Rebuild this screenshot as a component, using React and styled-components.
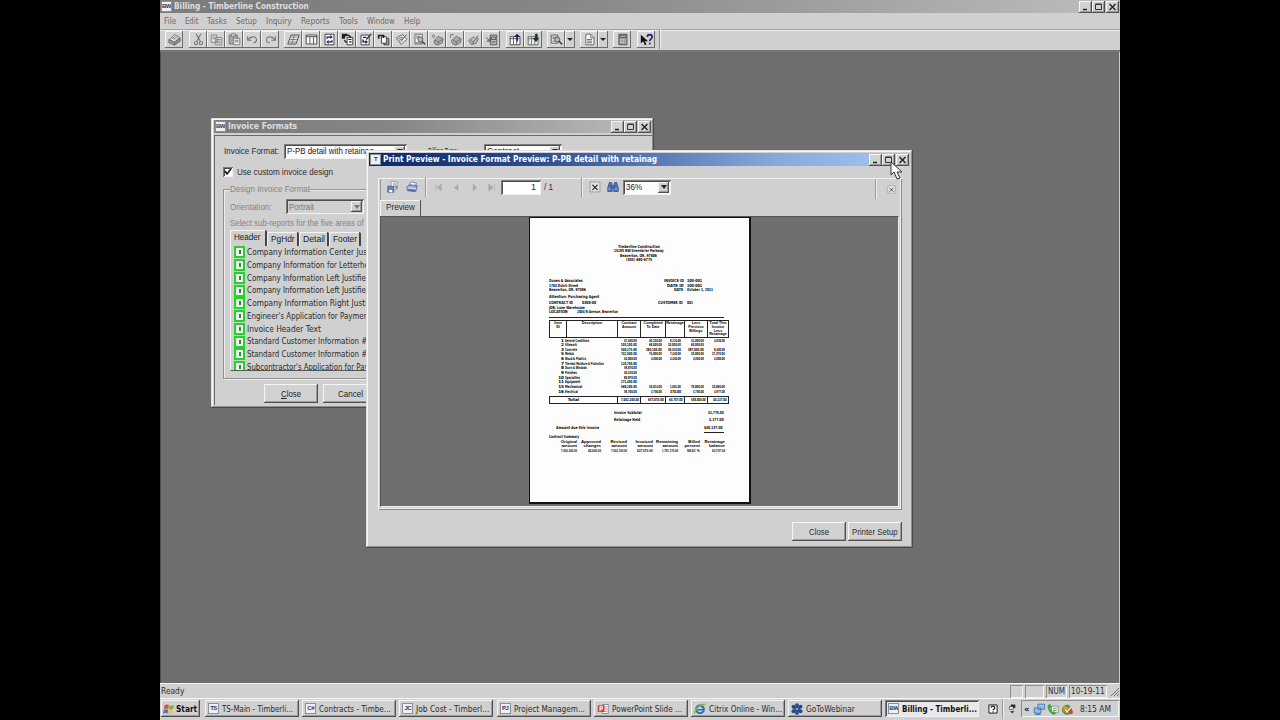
import React, { useLayoutEffect, useRef, useState } from 'react';
import styled, { createGlobalStyle, css } from 'styled-components';

const GlobalStyle = createGlobalStyle`
  * { box-sizing: border-box; }
  body { margin: 0; background: #000; overflow: hidden; }
`

const raised = css`
  box-shadow: inset -1px -1px #505050, inset 1px 1px #f6f6f6, inset -2px -2px #9c9c9c;
`
const sunken = css`
  box-shadow: inset 1px 1px #7c7c7c, inset -1px -1px #f2f2f2, inset 2px 2px #4c4c4c;
`
const thinSunken = css`
  box-shadow: inset 1px 1px #8e8e8e, inset -1px -1px #f4f4f4;
`

const Screen = styled.div`
  width: 960px;
  height: 720px;
  margin: 0 auto;
  display: flex;
  flex-direction: column;
  background: #d0d0d0;
  color: #2c2c2c;
  font-family: "DejaVu Sans", sans-serif;
  font-size: 8.5px;
  cursor: default;
`
const FitBox = styled.span`
  display: block;
  flex: none;
  width: ${p => p.$w}px;
  white-space: nowrap;
  text-align: left;
`
const FitInner = styled.span`
  display: inline-block;
  transform-origin: 0 50%;
`

// Squeezes or stretches a run of text to the given width
function Fit({ w, children, className }) {
  const ref = useRef(null);
  const [scale, setScale] = useState(1);
  useLayoutEffect(() => {
    setScale(w / ref.current.offsetWidth);
  }, [w]);
  return (
    <FitBox $w={w} className={className}>
      <FitInner ref={ref} style={{ transform: `scaleX(${scale})` }}>{children}</FitInner>
    </FitBox>
  );
}

/* ---------- icons ---------- */

const Svg = styled.svg`
  display: block;
  flex: none;
  width: ${p => p.$s || 14}px;
  height: ${p => p.$s || 14}px;
  overflow: visible;
`
const glyphs = {
  print: <g stroke="#666" fill="#b4b4b4"><path d="M2 8l6-6 6 3-6 7z" fill="#e4e4e4"/><path d="M1 8l7 3v4L1 12z" fill="#999"/><path d="M8 11l7-5v4l-7 5z" fill="#8a8a8a"/><path d="M5 7l4-3M7 8l4-3" /></g>,
  cut: <g stroke="#777" fill="none" strokeWidth="1.3"><path d="M5 1l5 9M11 1L6 10"/><circle cx="5" cy="12.5" r="2"/><circle cx="11" cy="12.5" r="2"/></g>,
  copy: <g stroke="#777" fill="#e4e4e4"><path d="M1.500 2.500h7v9h-7zM6.500 5.500h8v9h-8z"/><path d="M3 5h3M3 7h3M8 8h5M8 10h5M8 12h5"/></g>,
  paste: <g stroke="#6c6c6c" fill="#a8a8a8"><path d="M1.500 2.500h10v11h-10z"/><path d="M4 1h5v3H4z" fill="#ddd"/><path d="M6.500 6.500h8v8h-8z" fill="#eee"/><path d="M8 9h5M8 11h5"/></g>,
  undo: <path d="M2 4v5h5M2 9c3-5 10-6 11-1 0 3-2 4-4 4" fill="none" stroke="#777" strokeWidth="1.3"/>,
  redo: <path d="M14 4v5H9M14 9C11 4 4 3 3 8c0 3 2 4 4 4" fill="none" stroke="#777" strokeWidth="1.3"/>,
  sheet: <g stroke="#333" fill="#eee"><path d="M5 2.500h10l-4 11H1z"/><path d="M5 5h8M4 8h8M3 11h8M9 3L6 13" stroke="#666"/></g>,
  table: <g stroke="#333" fill="#fafafa"><path d="M1.500 2.500h13v11h-13z"/><path d="M1 4.500h14M6 5v8M10.500 5v8" /></g>,
  refresh: <g><path d="M2.500 1.500h11v13h-11z" fill="#fff" stroke="#222"/><path d="M5 7V5h4M11 9v2H7" fill="none" stroke="#14145c" strokeWidth="1.500"/><path d="M9 2.500L12 5 9 7.500zM7 8.500L4 11l3 2.500z" fill="#14145c"/></g>,
  sync: <g><path d="M7.500 5.500h7v9h-7z" fill="#fff" stroke="#222"/><path d="M1 1h7v3H5v3H1z" fill="#222"/><path d="M3 6c0-4 8-5 9 0M4 9l3 3" fill="none" stroke="#222" strokeWidth="1.600"/><path d="M9 8h4M10 11h3" stroke="#14145c" strokeWidth="1.500"/></g>,
  edit: <g><path d="M2.500 2.500h10v12h-10z" fill="#fff" stroke="#222"/><path d="M5 5.500h4M5 8v3h4" fill="none" stroke="#14145c" strokeWidth="1.600"/><path d="M8 8.500L11 11l-3 2.500z" fill="#14145c"/><path d="M9 8l6-7" stroke="#333" strokeWidth="1.600"/></g>,
  stack: <g><path d="M8.500 6.500h6v8h-6z" fill="#999" stroke="#333"/><path d="M5.500 4.500h6v8h-6z" fill="#fff" stroke="#333"/><path d="M2 7V3h6v3" fill="none" stroke="#222" strokeWidth="2"/></g>,
  note: <g stroke="#555" fill="#eee"><path d="M1.500 6l8-4 5 6-7 6z"/><path d="M4 7l6-2M5 9l5-2M7 11l7-9" /></g>,
  search: <g stroke="#555" fill="#f1f1f1"><path d="M2.500 1.500h9v12h-9z"/><path d="M4 4h5M4 6h3M3 12h8"/><circle cx="9" cy="8" r="3" fill="#bbb"/><path d="M11 10l4 4" strokeWidth="2"/></g>,
  gearprint: <g stroke="#666" fill="#aaa"><path d="M4 9l5-5 6 3-1 5-6 3-4-2z"/><path d="M5 9l4 2 5-3M9 11v3"/><circle cx="3" cy="4" r="1.500" fill="none"/></g>,
  handprint: <g stroke="#666" fill="#aaa"><path d="M3 9l6-5 6 3-1 5-6 3-4-2z"/><path d="M5 9l4 2 5-3M9 11v3M2 2h4M2 2v4"/></g>,
  post: <g stroke="#666" fill="#bbb"><path d="M2 9l6-4 6 2-3 6-6 1z"/><path d="M4 9l4 2 6-8M8 11l-1 3"/></g>,
  exit: <g stroke="#444" fill="#bbb"><path d="M6.500 2.500h8v12h-8z"/><path d="M8 5h5v3H8zM8 11h5M1 5l5 5M2 10h4V6"/></g>,
  colup: <g><path d="M1.500 4.500h12v10h-12z" fill="#fff" stroke="#333"/><path d="M1 7h12M5.500 5v9M9.500 5v9" stroke="#444"/><path d="M10 1l4 4h-3v5H9V5H6z" fill="#1c2270"/></g>,
  coldown: <g><path d="M1.500 4.500h12v10h-12z" fill="#eee" stroke="#555"/><path d="M1 7h12M5.500 5v9M9.500 5v9" stroke="#666"/><path d="M10 1h3v5h2l-4 5-4-5h3z" fill="#1c3328"/></g>,
  zoomdoc: <g stroke="#444" fill="#f1f1f1"><path d="M1.500 2.500h8v10h-8z"/><path d="M3 5h5M3 7h3M3 10h4"/><circle cx="9" cy="8" r="3" fill="#bbb"/><path d="M11 10l4 4" strokeWidth="1.800"/></g>,
  doc: <g stroke="#555" fill="#f6f6f6"><path d="M3.500 1.500h6l4 4v9h-10z"/><path d="M9.500 2v4h4M5 8h6M5 10h6M5 12h6" fill="none"/></g>,
  calc: <g stroke="#444" fill="#999"><path d="M3.500 1.500h10v13h-10z"/><path d="M5 3.500h7v2H5z" fill="#eee"/><path d="M5 8.500h7M5 11.500h7" stroke="#eee" strokeDasharray="2 1"/></g>,
  help: <g fill="#111"><path d="M1 2v11l3-3 2 5 2-1-2-4h4z"/><path d="M9 5c0-4 6-4 6 0 0 2.500-3 2-3 5M12 12v2" fill="none" stroke="#1c2270" strokeWidth="2"/></g>,
  exportIcon: <g><path d="M5.500.5h8v11h-8z" fill="#f4f4f4" stroke="#8391a5"/><path d="M8 3h4M8 5h4" stroke="#8391a5"/><path d="M1 7h8v8H1z" fill="#6b87ad" stroke="#44597a"/><path d="M3 12h4v3H3z" fill="#fff"/><path d="M8 8h5M11 6l3 2-3 3" stroke="#44597a" fill="none"/></g>,
  bluePrint: <g stroke="#48628f"><path d="M4 5l3-4 7 2-2 4z" fill="#fff"/><path d="M1 8l4-3 10 1-2 8-11-1z" fill="#8aaada"/><path d="M2 9l11 1" stroke="#fff"/><path d="M3 12l9 1" strokeWidth="2"/></g>,
  first: <path d="M4 3v10M12 3L6 8l6 5z" fill="#aaa" stroke="#aaa"/>,
  prev: <path d="M10 4L5 8l5 4z" fill="#aaa" stroke="#aaa"/>,
  next: <path d="M6 3l5 5-5 5z" fill="#aaa" stroke="#aaa"/>,
  last: <path d="M12 3v10M4 3l6 5-6 5z" fill="#aaa" stroke="#aaa"/>,
  binoculars: <g fill="#5272b4" stroke="#32518e"><path d="M3 2h3l1 5v7H1V9zM10 2h3l2 7v5H9V7z"/><path d="M6 6h4v3H6z"/><path d="M3 9v3M12 9v3" stroke="#cddaf2"/></g>,
  xbox: <g><path d="M1.500 1.500h13v13h-13z" fill="#e8e8e8" stroke="#8c8c8c"/><path d="M4.500 5l7 7M11.500 5l-7 7" stroke="#333" strokeWidth="1.500"/></g>,
  flag: <g><path d="M2 3c2-2 4-1 6 0L7 8C5 7 3 7 1 8z" fill="#d9582b"/><path d="M9 3c2 1 4 1 6 0l-2 5c-2 1-4 1-5 0z" fill="#7fae3c"/><path d="M1 9c2-1 4-1 6 0l-1 5c-2-1-4-1-6 0z" fill="#4a76c4"/><path d="M8 9c1 1 3 1 5 0l-1 5c-2 1-4 1-5 0z" fill="#eec33d"/></g>,
  ppt: <g><path d="M7 2h8v12H7z" fill="#fff" stroke="#5b7794"/><path d="M9 5h5M9 8h5M9 11h5" stroke="#c66"/><path d="M1 3h9v9H1z" fill="#c8452b"/><path d="M4 11V5h3v3H4" fill="none" stroke="#fff" strokeWidth="1.500"/></g>,
  ie: <g fill="none"><circle cx="8" cy="8.500" r="5" stroke="#2277b8" strokeWidth="3"/><path d="M5 9h8" stroke="#2277b8" strokeWidth="2"/><path d="M1 14C0 9 10 0 15 2" stroke="#8eb53c" strokeWidth="2"/></g>,
  gotomeeting: <g fill="#284b86"><circle cx="8" cy="8" r="4"/><circle cx="8" cy="2.800" r="2.600"/><circle cx="8" cy="13.200" r="2.600"/><circle cx="3.300" cy="5" r="2.600"/><circle cx="12.700" cy="5" r="2.600"/><circle cx="3.300" cy="11" r="2.600"/><circle cx="12.700" cy="11" r="2.600"/><circle cx="8" cy="8" r="1.800" fill="#8aa4d2"/></g>,
  restore: <g><path d="M5 1h8v6H5z" fill="#222"/><path d="M2.500 4.500h7v5h-7z" fill="#eee" stroke="#222"/><path d="M4 13h7l-3.500 3.500z" fill="#111"/></g>,
  network: <g stroke="#3a6aa8" fill="#8cc0ee"><path d="M6.500 1.500h9v7h-9zM1.500 6.500h9v7h-9z"/><path d="M3 15h7" strokeWidth="1.600"/></g>,
  phone: <g><path d="M6 4h9v9H6z" fill="#edf3ea" stroke="#6a8e60"/><path d="M8 7h5M8 10h5" stroke="#668"/><path d="M1 3l3-2 2 4-2 2 4 5 2-1 2 3-3 2C4 14 0 8 1 3z" fill="#3fa83c"/></g>,
  sound: <g><circle cx="8" cy="9" r="6" fill="#5aa945" stroke="#37752f"/><path d="M3 3l7 4-1 5-6-2z" fill="#e59526"/><path d="M6 9l2 3 6-7" fill="none" stroke="#fff" strokeWidth="1.500"/><circle cx="13" cy="12" r="3" fill="#cc4a33"/></g>,
  helpbox: <g><path d="M1.500 1.500h13v13h-13z" fill="#fff" stroke="#111" strokeWidth="1.500"/><path d="M5 6c0-4 6-3 6 0 0 2-3 2-3 4M8 11.500v2" fill="none" stroke="#111" strokeWidth="1.800"/></g>,
};

function Icon({ name, size }) {
  return <Svg viewBox="0 0 16 16" $s={size}>{glyphs[name]}</Svg>;
}

const AppBadge = styled.span`
  flex: none;
  width: 11px;
  height: 11px;
  background: #eef0f4;
  border: 1px solid #8a8f9c;
  color: #2b3560;
  font: bold 6px/9px "Liberation Sans", sans-serif;
  letter-spacing: -0.5px;
  text-align: center;
  overflow: hidden;
`

/* ---------- window chrome ---------- */

const TitleBar = styled.div`
  display: flex;
  align-items: center;
  flex: none;
  height: 13px;
  padding: 0 2px 0 1px;
  gap: 2px;
  background: ${p => p.$active
    ? 'linear-gradient(90deg, #0c2868 0%, #2a4c8c 30%, #86a8dc 75%, #a4c8f2 100%)'
    : 'linear-gradient(90deg, #7c7c7c 0%, #858585 40%, #bdbdbd 100%)'};
  color: ${p => p.$active ? '#fff' : '#dedede'};
  font-size: 8.8px;
  font-weight: bold;
  line-height: 13px;
`
const CaptionButtons = styled.div`
  display: flex;
  margin-left: auto;
  margin-right: -1px;
`
const CaptionButton = styled.span`
  width: 13px;
  height: 12px;
  background: #d2d2d2;
  ${raised}
  display: flex;
  align-items: center;
  justify-content: center;
  &:last-child { margin-left: 1px; }
`
function Captions() {
  return (
    <CaptionButtons>
      <CaptionButton><Svg $s={8} viewBox="0 0 8 8"><path d="M1 6.500h4" stroke="#222" strokeWidth="1.500"/></Svg></CaptionButton>
      <CaptionButton><Svg $s={8} viewBox="0 0 8 8"><path d="M.5 1.500h6v5h-6zM.5 1h6" fill="none" stroke="#333"/></Svg></CaptionButton>
      <CaptionButton><Svg $s={8} viewBox="0 0 8 8"><path d="M.5 1l6 6M6.500 1l-6 6" stroke="#222" strokeWidth="1.400"/></Svg></CaptionButton>
    </CaptionButtons>
  );
}
const Arrow = styled.span`
  width: 11px;
  align-self: stretch;
  margin-left: auto;
  background: #d0d0d0;
  ${raised}
  display: flex;
  align-items: center;
  justify-content: center;
  &::after {
    content: '';
    border: 3px solid transparent;
    border-top: 4px solid ${p => p.$dim ? '#777' : '#222'};
    border-bottom: 0;
  }
`
const Select = styled.div`
  flex: none;
  display: flex;
  align-items: center;
  width: ${p => p.$w}px;
  height: 15px;
  padding: 2px 2px 2px 3px;
  background: ${p => p.$dim ? '#d0d0d0' : '#fcfcfc'};
  color: ${p => p.$dim ? '#777' : '#222'};
  ${sunken}
`
const PushButton = styled.div`
  width: 54px;
  height: 19px;
  display: flex;
  align-items: center;
  justify-content: center;
  flex: none;
  background: #d2d2d2;
  ${raised}
  u { text-underline-offset: 1px; }
`

/* ---------- main menu and toolbar ---------- */

const MenuBar = styled.div`
  height: 16px;
  display: flex;
  gap: 9px;
  padding: 0 0 0 4px;
  line-height: 16px;
  color: #6b6b6b;
`
const Toolbar = styled.div`
  height: 23px;
  flex: none;
  display: flex;
  align-items: center;
  padding: 0 0 2px 5px;
  border-top: 1px solid #a4a4a4;
  border-bottom: 2px solid #777;
  box-shadow: inset 0 1px #ececec;
`
const ToolGroup = styled.div`
  display: flex;
  margin-right: ${p => p.$after || 6}px;
`
const ToolButton = styled.span`
  width: 18px;
  height: 17px;
  display: flex;
  align-items: center;
  justify-content: center;
  background: #d4d4d4;
  box-shadow: inset -1px -1px #6a6a6a, inset 1px 1px #f4f4f4;
`
const ToolDrop = styled.span`
  width: 10px;
  height: 17px;
  display: flex;
  align-items: center;
  justify-content: center;
  box-shadow: inset -1px -1px #6a6a6a, inset 1px 1px #f4f4f4;
  &::after { content: ''; border: 3px solid transparent; border-top-color: #222; border-bottom: 0; }
`
const ToolEnd = styled.span`
  width: 2px;
  height: 20px;
  border-left: 1px solid #888;
  border-right: 1px solid #f2f2f2;
`
const toolGroups = [
  { icons: ['print'], after: 6 },
  { icons: ['cut', 'copy', 'paste', 'undo', 'redo'], after: 5 },
  { icons: ['sheet', 'table', 'refresh', 'sync', 'edit', 'stack', 'note', 'search', 'gearprint', 'handprint', 'post', 'exit'], after: 6 },
  { icons: ['colup', 'coldown'], after: 5 },
  { icons: ['zoomdoc'], drop: true, after: 5 },
  { icons: ['doc'], drop: true, after: 5 },
  { icons: ['calc'], after: 6 },
  { icons: ['help'], after: 4 },
];
const menus = [['File', 12], ['Edit', 13], ['Tasks', 20], ['Setup', 21], ['Inquiry', 26], ['Reports', 29], ['Tools', 19], ['Window', 28], ['Help', 16]];

const Workspace = styled.div`
  position: relative;
  flex: 1;
  background: #6e6e6e;
  border-left: 1px solid #4e4e4e;
  border-right: 1px solid #c8c8c8;
`
const Window = styled.div`
  position: absolute;
  left: ${p => p.$x}px;
  top: ${p => p.$y}px;
  width: ${p => p.$w}px;
  height: ${p => p.$h}px;
  padding: ${p => p.$pad};
  display: flex;
  flex-direction: column;
  background: #d0d0d0;
  box-shadow: inset -1px -1px #4a4a4a, inset 1px 1px #dedede, inset -2px -2px #8e8e8e, inset 2px 2px #f8f8f8;
`

/* ---------- invoice formats ---------- */

const FormatBody = styled.div`
  margin-top: 2px;
  border-top: 1px solid #6a6a6a;
  border-left: 1px solid #6a6a6a;
  flex: 1;
  padding: 8px 0 0 9px;
  font-family: "Liberation Sans", Arial, sans-serif;
  font-size: 9px;
`
const FieldRow = styled.div`
  display: flex;
  align-items: center;
  height: 14px;
`
const FieldGap = styled.span`
  flex: none;
  width: ${p => p.$w}px;
`
const CheckRow = styled.div`
  display: flex;
  align-items: center;
  gap: 4px;
  height: 12px;
  margin: 8px 0 0 -1px;
`
const Checkbox = styled.span`
  width: 10px;
  height: 10px;
  background: #fff;
  ${sunken}
  display: flex;
  align-items: center;
  justify-content: center;
`
const Group = styled.div`
  margin: 11px 0 0 -1px;
  width: 420px;
  height: 190px;
  border: 1px solid #929292;
  box-shadow: inset 1px 1px #eee, 1px 1px #eee;
  padding: 0 0 0 6px;
  color: #858585;
`
const Legend = styled.div`
  display: table;
  margin-top: -7px;
  height: 13px;
  line-height: 13px;
  background: #d0d0d0;
`
const OrientRow = styled.div`
  display: flex;
  align-items: center;
  height: 15px;
  margin-top: 3px;
  gap: 14px;
`
const SubNote = styled.div`
  height: 12px;
  line-height: 12px;
  margin-top: 3px;
`
const FormatTabs = styled.div`
  display: flex;
  align-items: flex-end;
  height: 16px;
  margin-top: 1px;
  color: #222;
`
const FormatTab = styled.div`
  height: ${p => p.$on ? 16 : 14}px;
  line-height: ${p => p.$on ? 15 : 14}px;
  padding: 0 ${p => p.$on ? 4 : 2}px 0 4px;
  border-radius: 2px 2px 0 0;
  border-right: 2px solid #444;
  box-shadow: inset 1px 1px #f4f4f4;
`
const FormatList = styled.div`
  height: 125px;
  overflow: hidden;
  border-left: 1px solid #f0f0f0;
  border-bottom: 1px solid #555;
  margin-right: 8px;
  color: #2a2a2a;
  font: 9px/12.75px "DejaVu Sans", sans-serif;
`
const FormatItem = styled.div`
  display: flex;
  align-items: center;
  height: 12.75px;
  padding-left: 4px;
  gap: 3px;
`
const GreenIcon = styled.span`
  width: 9px;
  height: 10px;
  border: 1px solid #23d32b;
  outline: 0.5px solid #23d32b;
  background: #eefbee;
  display: flex;
  align-items: center;
  justify-content: center;
  &::after { content: ''; width: 2px; height: 4px; background: #3d7a46; }
`
const FormatButtons = styled.div`
  display: flex;
  gap: 5px;
  margin: 5px 0 0 40px;
  color: #222;
`
const formats = [
  ['Company Information Center Justified', 139], ['Company Information for Letterhead', 131],
  ['Company Information Left Justified 1', 130], ['Company Information Left Justified 2', 130],
  ['Company Information Right Justified', 134], ["Engineer's Application for Payment", 124],
  ['Invoice Header Text', 74], ['Standard Customer Information #1', 125],
  ['Standard Customer Information #2', 125], ["Subcontractor's Application for Payment", 140],
];

function InvoiceFormats() {
  return (
    <Window $x={50} $y={66} $w={443} $h={290} $pad="2px 2px 3px 3px">
      <TitleBar><AppBadge>BW</AppBadge><Fit w={69}>Invoice Formats</Fit><Captions /></TitleBar>
      <FormatBody>
        <FieldRow>
          <Fit w={55}>Invoice Format:</Fit><FieldGap $w={5} />
          <Select $w={123}><Fit w={87}>P-PB detail with retainag</Fit><Arrow /></Select>
          <FieldGap $w={21} /><Fit w={30}>Billing Type:</Fit><FieldGap $w={26} />
          <Select $w={78}><Fit w={32}>Contract</Fit><Arrow /></Select>
        </FieldRow>
        <CheckRow>
          <Checkbox><Svg $s={8} viewBox="0 0 8 8"><path d="M1 3l2 3 4-5" fill="none" stroke="#111" strokeWidth="1.600"/></Svg></Checkbox>
          <Fit w={96}>Use custom invoice design</Fit>
        </CheckRow>
        <Group>
          <Legend><Fit w={80}>Design Invoice Format</Fit></Legend>
          <OrientRow><Fit w={42}>Orientation:</Fit><Select $w={78} $dim><Fit w={25}>Portrait</Fit><Arrow $dim /></Select></OrientRow>
          <SubNote><Fit w={134}>Select sub-reports for the five areas of</Fit></SubNote>
          <FormatTabs>
            <FormatTab $on><Fit w={27}>Header</Fit></FormatTab>
            <FormatTab><Fit w={24}>PgHdr</Fit></FormatTab>
            <FormatTab><Fit w={22}>Detail</Fit></FormatTab>
            <FormatTab><Fit w={24}>Footer</Fit></FormatTab>
          </FormatTabs>
          <FormatList>
            {formats.map(([name, w]) => (
              <FormatItem key={name}><GreenIcon /><Fit w={w}>{name}</Fit></FormatItem>
            ))}
          </FormatList>
        </Group>
        <FormatButtons>
          <PushButton><Fit w={20}><u>C</u>lose</Fit></PushButton>
          <PushButton><Fit w={25}>Cancel</Fit></PushButton>
        </FormatButtons>
      </FormatBody>
    </Window>
  );
}

/* ---------- printed page ---------- */

const Page = styled.div`
  width: 222px;
  height: 287px;
  margin: 0 auto;
  position: relative;
  left: 0.5px;
  padding: 27px 21px 0 19px;
  background: #fdfdfd;
  border: 1px solid #111;
  border-right-width: 2px;
  border-bottom-width: 2px;
  color: #000;
  font: bold 4.2px/4.4px "DejaVu Sans", sans-serif;
`
const Letterhead = styled.div`
  display: flex;
  flex-direction: column;
  align-items: center;
  height: 34px;
`
const PageRow = styled.div`
  display: flex;
  height: ${p => p.$h || 4.5}px;
  padding-left: ${p => p.$l || 0}px;
`
const PageGap = styled.span`
  flex: none;
  width: ${p => p.$w}px;
`
const Rule = styled.div`
  width: 175px;
  height: 1px;
  margin: 2px 0 2px;
  background: #222;
`
const tableGrid = css`
  display: grid;
  grid-template-columns: 16px 51px 23px 25px 19px 23px 21px;
  width: 180px;
`
const TableHead = styled.div`
  ${tableGrid}
  height: 18px;
  border: 1px solid #222;
  font: bold 3.7px/3.8px "Liberation Sans", Arial, sans-serif;
  text-align: center;
`
const HeadCell = styled.div`
  border-left: ${p => p.$first ? '0' : '1px solid #222'};
  padding-top: 1px;
  white-space: pre-line;
`
const TableBody = styled.div`
  padding-top: 0.5px;
  height: 58px;
`
const TableRow = styled.div`
  ${tableGrid}
  height: 4.65px;
  line-height: 4.65px;
`
const Cell = styled.div`
  display: flex;
  padding-right: ${p => p.$right ? 2 : 1}px;
  justify-content: ${p => p.$left ? 'flex-start' : 'flex-end'};
`
const TotalRow = styled.div`
  ${tableGrid}
  height: 8px;
  line-height: 6px;
  border: 1px solid #222;
`
const TotalCell = styled.div`
  display: flex;
  justify-content: ${p => p.$label ? 'center' : 'flex-end'};
  grid-column: ${p => p.$label ? 'span 2' : 'auto'};
  border-left: ${p => p.$label ? '0' : '1px solid #222'};
  padding-right: ${p => p.$label ? 20 : 1}px;
`
const Totals = styled.div`
  padding-top: 6.5px;
`
const AmountLine = styled.div`
  width: 20px;
  height: 1px;
  margin: 0 0 1.5px 155px;
  background: #222;
`
const Summary = styled.div`
  display: grid;
  grid-template-columns: 28px 24px 26px 26px 25px 22px 25px;
  font: bold 4.3px/4.7px "Liberation Sans", Arial, sans-serif;
  text-align: right;
`
const SummaryCell = styled.div`
  display: flex;
  flex-direction: column;
  align-items: flex-end;
`
const heads = ['Item\nID', 'Description', 'Contract\nAmount', 'Completed\nTo Date', 'Retainage', 'Less\nPrevious\nBillings', 'Total This\nInvoice\nLess\nRetainage'];
const lines = [
  ['1', 'General Conditions', 24, '47,400.00', '40,240.00', '8,224.00', '42,000.00', '4,030.00'],
  ['2', 'Sitework', 12, '103,100.00', '68,000.00', '10,000.00', '60,000.00', ''],
  ['3', 'Concrete', 12, '500,175.00', '383,100.00', '38,310.00', '387,000.00', '8,400.00'],
  ['5', 'Metals', 9, '742,500.00', '74,000.00', '7,440.00', '10,000.00', '17,370.00'],
  ['6', 'Wood & Plastics', 21, '44,000.00', '4,000.00', '4,440.00', '4,000.00', '4,000.00'],
  ['7', 'Thermal Moisture & Protection', 39, '120,700.00', '', '', '', ''],
  ['8', 'Doors & Windows', 22, '59,870.00', '', '', '', ''],
  ['9', 'Finishes', 12, '40,320.00', '', '', '', ''],
  ['10', 'Specialties', 15, '80,870.00', '', '', '', ''],
  ['11', 'Equipment', 15, '271,400.00', '', '', '', ''],
  ['15', 'Mechanical', 17, '568,100.00', '10,014.00', '1,001.00', '79,000.00', '10,060.00'],
  ['16', 'Electrical', 13, '58,700.00', '3,700.00', '370.00', '3,700.00', '4,977.00'],
];
const summary = [
  ['Original', 'amount', '7,002,000.00'], ['Approved', 'changes', '45,000.00'],
  ['Revised', 'amount', '7,002,100.00'], ['Invoiced', 'amount', '637,070.00'],
  ['Remaining', 'amount', '1,791,170.00'], ['Billed', 'percent', '58.61 %'],
  ['Retainage', 'balance', '63,707.00'],
];
const amountWidth = s => (s.length > 9 ? 16 : s.length > 8 ? 13 : 11);

function InvoicePage() {
  return (
    <Page>
      <Letterhead>
        <Fit w={42}>Timberline Construction</Fit>
        <Fit w={50}>15195 NW Greenbrier Parkway</Fit>
        <Fit w={37}>Beaverton, OR. 97006</Fit>
        <Fit w={26}>(503) 690-6775</Fit>
      </Letterhead>
      <PageRow><Fit w={34}>Dunes & Associates</Fit><PageGap $w={81} /><Fit w={20}>INVOICE ID</Fit><PageGap $w={3} /><Fit w={15}>100-001</Fit></PageRow>
      <PageRow><Fit w={29}>1704 Dutch Street</Fit><PageGap $w={89} /><Fit w={17}>DATE ID</Fit><PageGap $w={3} /><Fit w={15}>100-001</Fit></PageRow>
      <PageRow $h={6.5}><Fit w={37}>Beaverton, OR. 97006</Fit><PageGap $w={88} /><Fit w={9}>DATE</Fit><PageGap $w={4} /><Fit w={26}>October 1, 2011</Fit></PageRow>
      <PageRow $h={6}><Fit w={50}>Attention: Purchasing Agent</Fit></PageRow>
      <PageRow $h={5}><Fit w={24}>CONTRACT ID</Fit><PageGap $w={9} /><Fit w={14}>0300-00</Fit><PageGap $w={62} /><Fit w={25}>CUSTOMER ID</Fit><PageGap $w={4} /><Fit w={6}>001</Fit></PageRow>
      <PageRow><Fit w={36}>JOB: Lone Warehouse</Fit></PageRow>
      <PageRow $h={5}><Fit w={19}>LOCATION</Fit><PageGap $w={9} /><Fit w={41}>2004 N Avenue, Beaverton</Fit></PageRow>
      <Rule />
      <TableHead>
        {heads.map((h, i) => <HeadCell key={h} $first={i === 0}>{h}</HeadCell>)}
      </TableHead>
      <TableBody>
        {lines.map(([id, name, w, ...amounts]) => (
          <TableRow key={id}>
            <Cell>{id}</Cell>
            <Cell $left><Fit w={w}>{name}</Fit></Cell>
            {amounts.map((a, i) => <Cell key={i} $right>{a && <Fit w={amountWidth(a)}>{a}</Fit>}</Cell>)}
          </TableRow>
        ))}
      </TableBody>
      <TotalRow>
        <TotalCell $label>Total</TotalCell>
        <TotalCell><Fit w={18}>7,002,100.00</Fit></TotalCell>
        <TotalCell><Fit w={16}>637,070.00</Fit></TotalCell>
        <TotalCell><Fit w={14}>63,707.00</Fit></TotalCell>
        <TotalCell><Fit w={15}>538,000.00</Fit></TotalCell>
        <TotalCell><Fit w={14}>40,137.00</Fit></TotalCell>
      </TotalRow>
      <Totals>
        <PageRow $h={7.5} $l={65}><Fit w={28}>Invoice Subtotal</Fit><PageGap $w={66} /><Fit w={16}>41,775.00</Fit></PageRow>
        <PageRow $h={8} $l={65}><Fit w={26}>Retainage Held</Fit><PageGap $w={69} /><Fit w={15}>4,177.00</Fit></PageRow>
        <PageRow $h={6} $l={7}><Fit w={43}>Amount due this invoice</Fit><PageGap $w={105} /><Fit w={19}>$40,137.00</Fit></PageRow>
      </Totals>
      <AmountLine />
      <PageRow $h={5}><Fit w={30}>Contract Summary</Fit></PageRow>
      <Summary>
        {summary.map(([a, b, amount]) => (
          <SummaryCell key={a}><span>{a}</span><span>{b}</span><Fit w={amount.length > 9 ? 16 : 13}>{amount}</Fit></SummaryCell>
        ))}
      </Summary>
    </Page>
  );
}

/* ---------- print preview ---------- */

const PreviewFrame = styled.div`
  margin: 12px 8px 0 9px;
  height: 332px;
  padding: 1px 3px 3px 2px;
  box-shadow: inset 1px 1px #f2f2f2, inset -1px -1px #888, inset -2px -2px #eee;
  display: flex;
  flex-direction: column;
  font-family: "Liberation Sans", Arial, sans-serif;
  font-size: 9px;
`
const PreviewTools = styled.div`
  height: 21px;
  display: flex;
  align-items: center;
  padding: 0 3px 5px 6px;
  border-left: 1px solid #999;
`
const ToolSpace = styled.span`
  flex: none;
  width: ${p => p.$w}px;
`
const Divider = styled.span`
  width: 2px;
  height: 20px;
  border-left: 1px solid #999;
  border-right: 1px solid #eee;
`
const PageInput = styled.div`
  width: 40px;
  height: 15px;
  padding: 0 5px;
  background: #fff;
  line-height: 15px;
  text-align: right;
  ${sunken}
`
const RightTools = styled.div`
  display: flex;
  align-items: center;
  gap: 10px;
  margin: 4px 0 0 auto;
`
const PreviewTab = styled.div`
  width: 41px;
  height: 16px;
  padding-left: 6px;
  line-height: 15px;
  border-right: 1px solid #555;
  box-shadow: inset 1px 1px #f4f4f4;
`
const PreviewTabs = styled.div`
  height: 16px;
`
const Viewport = styled.div`
  flex: 1;
  background: #6f6f6f;
  border-top: 1px solid #555;
  border-left: 1px solid #555;
  border-right: 1px solid #eee;
  border-bottom: 1px solid #eee;
`
const PreviewButtons = styled.div`
  display: flex;
  justify-content: flex-end;
  gap: 2px;
  margin: 12px 8px 0 0;
  font-family: "Liberation Sans", Arial, sans-serif;
  font-size: 9px;
`

function PrintPreview() {
  return (
    <Window $x={205} $y={98} $w={547} $h={398} $pad="3px">
      <TitleBar $active><AppBadge>T</AppBadge><Fit w={274}>Print Preview - Invoice Format Preview: P-PB detail with retainag</Fit><Captions /></TitleBar>
      <PreviewFrame>
        <PreviewTools>
          <Icon name="exportIcon" size={12} /><ToolSpace $w={7} /><Icon name="bluePrint" size={12} />
          <ToolSpace $w={7} /><Divider /><ToolSpace $w={6} />
          <Icon name="first" size={11} /><ToolSpace $w={7} /><Icon name="prev" size={11} />
          <ToolSpace $w={7} /><Icon name="next" size={11} /><ToolSpace $w={6} /><Icon name="last" size={11} />
          <ToolSpace $w={4} /><PageInput>1</PageInput><ToolSpace $w={3} /><Fit w={9}>/ 1</Fit>
          <ToolSpace $w={28} /><Divider /><ToolSpace $w={6} />
          <Icon name="xbox" size={12} /><ToolSpace $w={6} /><Icon name="binoculars" size={12} />
          <ToolSpace $w={4} /><Select $w={48}><Fit w={16}>36%</Fit><Arrow /></Select>
          <RightTools><Divider /><Icon name="xbox" size={9} /></RightTools>
        </PreviewTools>
        <PreviewTabs><PreviewTab><Fit w={29}>Preview</Fit></PreviewTab></PreviewTabs>
        <Viewport><InvoicePage /></Viewport>
      </PreviewFrame>
      <PreviewButtons>
        <PushButton><Fit w={20}>Close</Fit></PushButton>
        <PushButton><Fit w={46}>Printer Setup</Fit></PushButton>
      </PreviewButtons>
    </Window>
  );
}

const Pointer = styled.svg`
  position: absolute;
  left: 729px;
  top: 109px;
  width: 13px;
  height: 19px;
`

/* ---------- status bar and taskbar ---------- */

const StatusBar = styled.div`
  height: 15px;
  flex: none;
  display: flex;
  align-items: center;
  padding: 0 1px;
  gap: 2px;
  border-top: 1px solid #f2f2f2;
`
const StatusCell = styled.span`
  height: 13px;
  width: ${p => p.$w}px;
  display: flex;
  justify-content: center;
  line-height: 13px;
  ${thinSunken}
`
const StatusFill = styled.span`
  flex: 1;
`
const Taskbar = styled.div`
  height: 22px;
  flex: none;
  display: flex;
  align-items: center;
  padding: 0 1px 2px;
  border-top: 1px solid #f6f6f6;
`
const StartButton = styled.div`
  width: 39px;
  height: 17px;
  margin-right: 5px;
  display: flex;
  align-items: center;
  gap: 1px;
  padding-left: 2px;
  font-weight: bold;
  color: #111;
  ${raised}
`
const TaskButton = styled.div`
  width: 94px;
  height: 17px;
  margin-right: 3.2px;
  flex: none;
  display: flex;
  align-items: center;
  gap: 3px;
  padding-left: 3px;
  ${p => p.$on ? css`background: #e9e9e9; font-weight: bold; color: #111; ${sunken}` : raised}
`
const TaskTail = styled.div`
  display: flex;
  align-items: center;
  gap: 4px;
  margin-left: auto;
`
const Tray = styled.div`
  width: 98px;
  height: 17px;
  display: flex;
  align-items: center;
  padding: 0 8px 0 3px;
  gap: 2px;
  ${thinSunken}
`
const Chevron = styled.span`
  width: 9px;
  font-weight: bold;
  color: #222;
`
const tasks = [
  { badge: 'TS', text: 'TS-Main - Timberli...', w: 71 },
  { badge: 'C#', text: 'Contracts - Timbe...', w: 72 },
  { badge: 'JC', text: 'Job Cost - Timberl...', w: 73 },
  { badge: 'PJ', text: 'Project Managem...', w: 71 },
  { icon: 'ppt', text: 'PowerPoint Slide ...', w: 70 },
  { icon: 'ie', text: 'Citrix Online - Win...', w: 73 },
  { icon: 'gotomeeting', text: 'GoToWebinar', w: 49 },
  { badge: 'BW', text: 'Billing - Timberli...', w: 75, on: true },
];

export default function App() {
  return (
    <Screen>
      <GlobalStyle />
      <TitleBar><AppBadge>BW</AppBadge><Fit w={135}>Billing - Timberline Construction</Fit><Captions /></TitleBar>
      <MenuBar>{menus.map(([m, w]) => <Fit key={m} w={w}>{m}</Fit>)}</MenuBar>
      <Toolbar>
        {toolGroups.map(g => (
          <ToolGroup key={g.icons[0]} $after={g.after}>
            {g.icons.map(i => <ToolButton key={i}><Icon name={i} size={13} /></ToolButton>)}
            {g.drop && <ToolDrop />}
          </ToolGroup>
        ))}
        <ToolEnd />
      </Toolbar>
      <Workspace>
        <InvoiceFormats />
        <PrintPreview />
        <Pointer viewBox="0 0 13 19"><path d="M1 1v13l3-3 3 7 3-1-3-6h5z" fill="#fff" stroke="#333"/></Pointer>
      </Workspace>
      <StatusBar>
        <Fit w={23}>Ready</Fit>
        <StatusFill />
        <StatusCell $w={13} />
        <StatusCell $w={19} />
        <StatusCell $w={21}><Fit w={17}>NUM</Fit></StatusCell>
        <StatusCell $w={38}><Fit w={34}>10-19-11</Fit></StatusCell>
        <Svg $s={10} viewBox="0 0 10 10"><path d="M2 10l8-8M5 10l5-5M8 10l2-2" stroke="#777"/></Svg>
      </StatusBar>
      <Taskbar>
        <StartButton><Icon name="flag" size={12} /><Fit w={21}>Start</Fit></StartButton>
        {tasks.map(t => (
          <TaskButton key={t.text} $on={t.on}>
            {t.badge ? <AppBadge>{t.badge}</AppBadge> : <Icon name={t.icon} size={12} />}
            <Fit w={t.w}>{t.text}</Fit>
          </TaskButton>
        ))}
        <TaskTail>
          <Icon name="helpbox" size={10} />
          <Divider />
          <Icon name="restore" size={9} />
          <Tray>
            <Chevron>«</Chevron>
            <Icon name="network" size={12} /><Icon name="phone" size={12} /><Icon name="sound" size={12} />
            <ToolSpace $w={3} /><Fit w={31}>8:15 AM</Fit>
          </Tray>
        </TaskTail>
      </Taskbar>
    </Screen>
  );
}
